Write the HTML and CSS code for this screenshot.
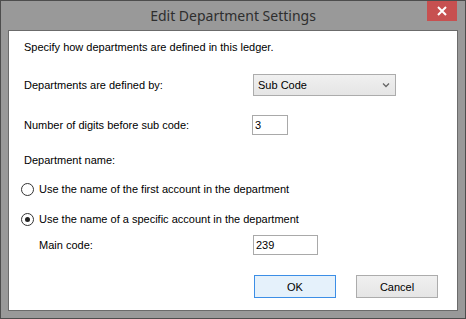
FILE: index.html
```html
<!DOCTYPE html>
<html>
<head>
<meta charset="utf-8">
<link rel="stylesheet" href="styles.css">
</head>
<body>
<div class="window">
  <div class="titlebar">
    <div class="title">Edit Department Settings</div>
    <div class="close"><svg width="10" height="10" viewBox="0 0 10 10"><path d="M1 1L9 9M9 1L1 9" stroke="#fff" stroke-width="2"/></svg></div>
  </div>
  <div class="panel">
    <div class="intro">Specify how departments are defined in this ledger.</div>
    <div class="row row-def">
      <div class="label">Departments are defined by:</div>
      <div class="select"><span>Sub Code</span><svg width="8" height="6" viewBox="0 0 8 6"><path d="M1 1.5L4 4.5L7 1.5" stroke="#666" stroke-width="1.3" fill="none"/></svg></div>
    </div>
    <div class="row row-digits">
      <div class="label">Number of digits before sub code:</div>
      <div class="input input-short">3</div>
    </div>
    <div class="heading">Department name:</div>
    <div class="radio-row radio-first">
      <span class="radio"></span><span>Use the name of the first account in the department</span>
    </div>
    <div class="radio-row radio-second">
      <span class="radio checked"></span><span>Use the name of a specific account in the department</span>
    </div>
    <div class="row row-main">
      <div class="label label-indent">Main code:</div>
      <div class="input input-main">239</div>
    </div>
    <div class="buttons">
      <div class="button button-default">OK</div>
      <div class="button">Cancel</div>
    </div>
  </div>
</div>
</body>
</html>
```

FILE: styles.css
```css
html, body {
  margin: 0;
  padding: 0;
  background: #999999;
}
.window {
  width: 466px;
  height: 319px;
  box-sizing: border-box;
  border: 1px solid #4d4d4d;
  background: #999999;
  display: flex;
  flex-direction: column;
  font-family: "Liberation Sans", Arial, sans-serif;
  font-size: 11px;
  color: #000;
}
.titlebar {
  height: 29px;
  flex: none;
  display: grid;
  grid-template-columns: 1fr auto 1fr;
}
.title {
  grid-column: 2;
  font-family: "Segoe UI", "Noto Sans", sans-serif;
  font-size: 14px;
  color: #2e2e2e;
  line-height: 29px;
}
.close {
  grid-column: 3;
  justify-self: end;
  width: 30px;
  height: 20px;
  margin-right: 8px;
  background: #c75050;
  display: flex;
  align-items: center;
  justify-content: center;
}
.panel {
  flex: 1;
  margin: 0 7px 7px 7px;
  border: 1px solid #6b6b6b;
  background: #ffffff;
  padding: 0 19px 0 15px;
  display: flex;
  flex-direction: column;
}
.intro {
  margin-top: 10px;
  line-height: 13px;
}
.row {
  display: flex;
  align-items: center;
}
.label {
  width: 229px;
  flex: none;
}
.label-indent {
  width: 214px;
  padding-left: 15px;
}
.row-def {
  margin-top: 20px;
  height: 22px;
}
.select {
  width: 143px;
  height: 22px;
  box-sizing: border-box;
  border: 1px solid #acacac;
  background: linear-gradient(#f0f0f0, #e5e5e5);
  display: flex;
  align-items: center;
  justify-content: space-between;
  padding: 0 5px 0 4px;
}
.row-digits {
  margin-top: 19px;
  height: 20px;
}
.input {
  height: 20px;
  box-sizing: border-box;
  border: 1px solid #a9a9a9;
  background: #fff;
  line-height: 18px;
  padding-left: 2px;
}
.input-short {
  width: 36px;
  margin-left: -1px;
}
.input-main {
  width: 65px;
}
.heading {
  margin-top: 19px;
  line-height: 13px;
}
.radio-row {
  display: flex;
  align-items: center;
  height: 16px;
  margin-left: -3px;
}
.radio-first {
  margin-top: 14px;
}
.radio-second {
  margin-top: 14px;
}
.radio {
  width: 13px;
  height: 13px;
  box-sizing: border-box;
  border: 1px solid #333;
  border-radius: 50%;
  background: #fff;
  margin-right: 5px;
  display: flex;
  align-items: center;
  justify-content: center;
}
.radio.checked::after {
  content: "";
  width: 5px;
  height: 5px;
  border-radius: 50%;
  background: #222;
}
.row-main {
  margin-top: 8px;
  height: 20px;
}
.buttons {
  margin-top: 20px;
  display: flex;
  justify-content: flex-end;
  gap: 20px;
}
.button {
  width: 82px;
  height: 23px;
  box-sizing: border-box;
  border: 1px solid #acacac;
  background: linear-gradient(#f0f0f0, #e5e5e5);
  display: flex;
  align-items: center;
  justify-content: center;
}
.button-default {
  border-color: #3c8ee6;
  background: #e5f1fb;
}
```
